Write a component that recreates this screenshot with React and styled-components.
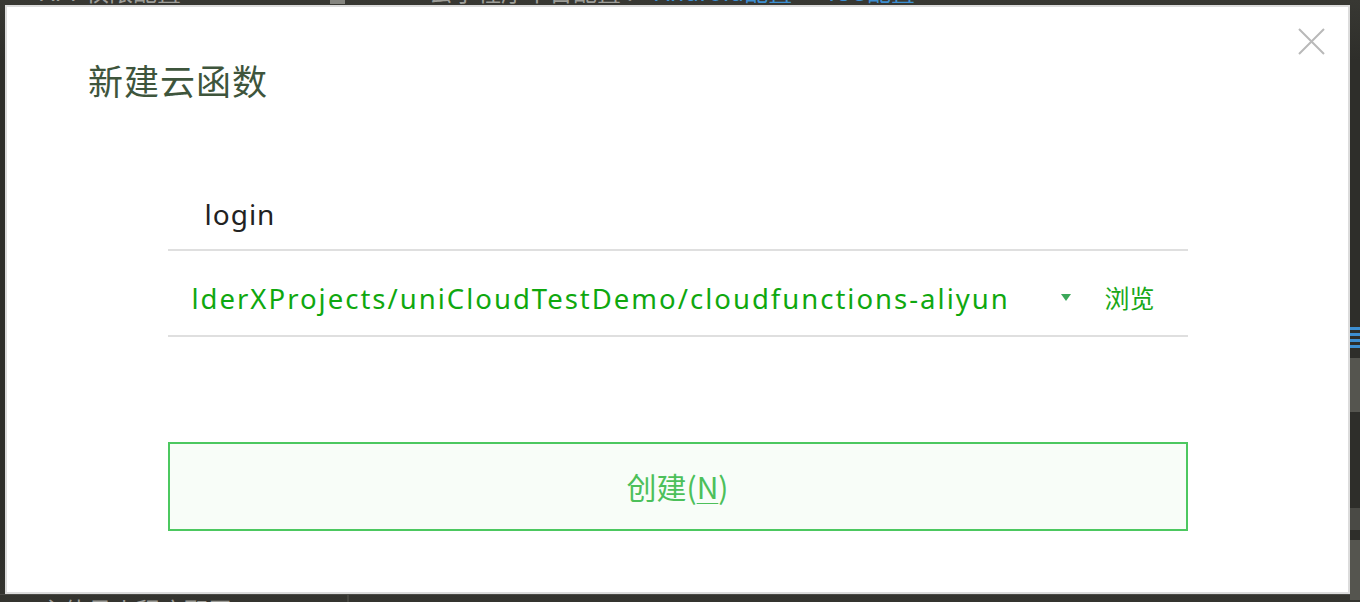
import React from 'react'
import styled, { createGlobalStyle } from 'styled-components'

const GlobalStyle = createGlobalStyle`
  html, body {
    margin: 0;
    padding: 0;
    background: #2f2f2b;
    overflow: hidden;
  }
  * {
    box-sizing: border-box;
  }
`

const Screen = styled.div`
  position: relative;
  width: 1360px;
  height: 602px;
  overflow: hidden;
  background: linear-gradient(#383833, #2e2e2a 10%, #2e2e2a 90%, #34342f);
  font-family: "Noto Sans", "Noto Sans CJK SC", sans-serif;
`

/* page behind the modal */
const Backdrop = styled.div`
  display: flex;
  height: 100%;
`

const BackdropMain = styled.div`
  flex: 1;
  display: flex;
  flex-direction: column;
  justify-content: space-between;
`

const BackdropRow = styled.div`
  display: flex;
  align-items: center;
  height: 30px;
  margin-top: ${p => p.$top || 0}px;
  margin-bottom: ${p => p.$bottom || 0}px;
  border-top: ${p => (p.$rule ? '1px solid #4a4a45' : 'none')};
`

const BgText = styled.span`
  font-family: "Noto Sans CJK SC", sans-serif;
  font-size: 24px;
  line-height: 30px;
  white-space: nowrap;
  color: ${p => (p.$link ? '#3d8fd2' : '#9d9d98')};
  margin-left: ${p => p.$gap || 0}px;
  width: ${p => (p.$w ? `${p.$w}px` : 'auto')};
`

const BgSquare = styled.span`
  width: 15px;
  height: 26px;
  margin-left: ${p => p.$gap}px;
  background: #85857f;
`

const BgDivider = styled.span`
  align-self: stretch;
  width: 2px;
  margin-left: ${p => p.$gap}px;
  background: #45453f;
`

const BackdropSide = styled.div`
  width: 10px;
  display: flex;
  flex-direction: column;
  padding-top: 327px;
`

const SideLink = styled.div`
  height: 23px;
  background: repeating-linear-gradient(#3d8fd2 0 3px, #2e2e2a 3px 6px);
`

const SideBlock = styled.div`
  height: ${p => p.$h}px;
  margin-top: ${p => p.$gap}px;
  background: ${p => p.$c};
`

/* modal */
const Dialog = styled.div`
  position: absolute;
  left: 5px;
  top: 5px;
  width: 1345px;
  height: 589px;
  background: #fff;
  border: 2px solid #dcdcdc;
  display: flex;
  flex-direction: column;
`

const Header = styled.div`
  height: 158px;
  display: flex;
  justify-content: space-between;
  align-items: flex-start;
  padding: 21px 23px 0 81px;
`

const Title = styled.h1`
  margin: 32px 0 0;
  font-family: "Noto Sans CJK SC", sans-serif;
  font-weight: 400;
  font-size: 35px;
  line-height: 40px;
  color: #3e553c;
  letter-spacing: 1px;
`

const Close = styled.button`
  width: 27px;
  height: 27px;
  padding: 0;
  border: none;
  background: none;
  cursor: pointer;
  svg {
    display: block;
  }
`

const Form = styled.div`
  width: 1020px;
  margin: 0 auto;
  display: flex;
  flex-direction: column;
`

const Field = styled.div`
  height: ${p => p.$h}px;
  display: flex;
  align-items: center;
  border-bottom: 2px solid #dfdfdf;
  padding: 10px 33px 0 ${p => p.$pad}px;
`

const NameInput = styled.div`
  font-size: 28px;
  color: #222;
  letter-spacing: 1px;
  padding-top: 4px;
`

const PathText = styled.div`
  flex: 1;
  overflow: hidden;
  white-space: nowrap;
  font-size: 27.5px;
  letter-spacing: 2px;
  color: #0fa80f;
`

const Caret = styled.span`
  width: 0;
  height: 0;
  border-left: 5.5px solid transparent;
  border-right: 5.5px solid transparent;
  border-top: 7px solid #3ca85a;
  margin: 0 33px 2px 0;
`

const Browse = styled.span`
  font-family: "Noto Sans CJK SC", sans-serif;
  font-size: 25px;
  color: #18a818;
  padding-bottom: 2px;
`

const Submit = styled.button`
  margin-top: 105px;
  height: 89px;
  width: 100%;
  border: 2px solid #4cc860;
  background: #f8fdf8;
  color: #4cc05a;
  font-family: "Noto Sans CJK SC", sans-serif;
  font-size: 30px;
  cursor: pointer;
  padding: 0 0 2px;

  u {
    text-decoration-thickness: 1px;
    text-underline-offset: 4px;
  }
`

const App = () => (
  <Screen>
    <GlobalStyle />
    <Backdrop>
      <BackdropMain>
        <BackdropRow $top={-24}>
          <BgText $gap={40} $w={260}>APP权限配置</BgText>
          <BgSquare $gap={30} />
          <BgText $gap={84}>去小程序平台配置 :</BgText>
          <BgText $link $gap={22}>Android配置</BgText>
          <BgText $link $gap={36}>iOS配置</BgText>
        </BackdropRow>
        <BackdropRow $bottom={-22} $rule>
          <BgText $gap={40} $w={305}>主体号小程序配置</BgText>
          <BgDivider $gap={2} />
        </BackdropRow>
      </BackdropMain>
      <BackdropSide>
        <SideLink />
        <SideBlock $gap={8} $h={54} $c="#55554f" />
        <SideBlock $gap={96} $h={22} $c="#4a4a45" />
        <SideBlock $gap={10} $h={60} $c="#55554f" />
      </BackdropSide>
    </Backdrop>

    <Dialog>
      <Header>
        <Title>新建云函数</Title>
        <Close aria-label="关闭">
          <svg width="27" height="27" viewBox="0 0 27 27">
            <path d="M1 1L26 26M26 1L1 26" stroke="#b9b9b9" strokeWidth="2" />
          </svg>
        </Close>
      </Header>
      <Form>
        <Field $h={86} $pad={37}>
          <NameInput>login</NameInput>
        </Field>
        <Field $h={86} $pad={24}>
          <PathText>lderXProjects/uniCloudTestDemo/cloudfunctions-aliyun</PathText>
          <Caret />
          <Browse>浏览</Browse>
        </Field>
        <Submit>
          创建(<u>N</u>)
        </Submit>
      </Form>
    </Dialog>
  </Screen>
)

export default App
